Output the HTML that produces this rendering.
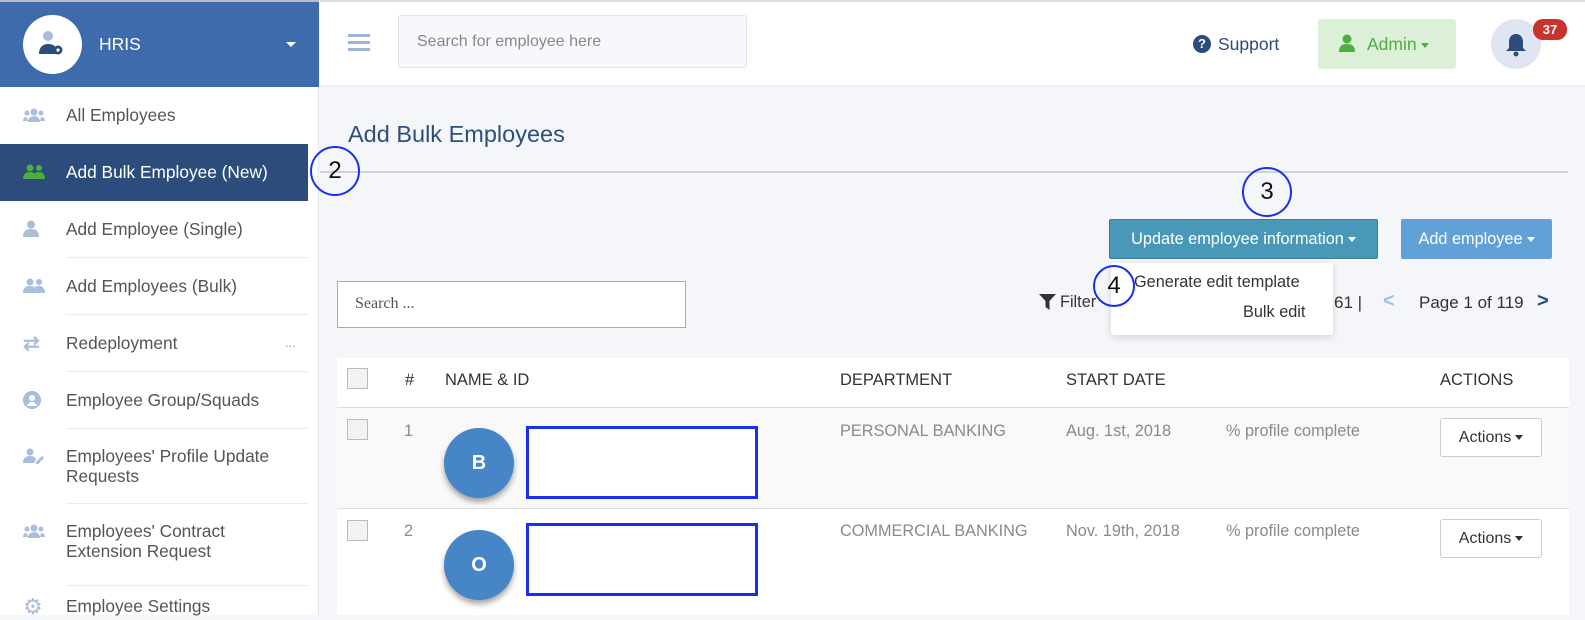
<!DOCTYPE html>
<html><head><meta charset="utf-8"><style>
*{box-sizing:border-box;margin:0;padding:0}
body{width:1585px;height:615px;overflow:hidden;background:#f5f6fa;font-family:"Liberation Sans",sans-serif;position:relative;color:#555}
.a{position:absolute}
.side{left:0;top:0;width:319px;height:615px;background:#fff;border-right:1px solid #e3e6ec}
.sh{left:0;top:0;width:319px;height:87px;background:#3d6bab;border-top:2px solid #b9bec6}
.it{position:absolute;left:66px;font-size:17.3px;color:#555;line-height:20px}
.sep{position:absolute;left:66px;width:242px;height:1px;background:#e8ecf2}
.ic{position:absolute;left:23px}
.th{font-size:16.5px;color:#333;position:absolute;top:371px}
.td{font-size:16.3px;color:#8a8a8a;position:absolute}
.cb{position:absolute;left:347px;width:21px;height:21px;border:1px solid #bbb;background:#f2f2f2}
.av{position:absolute;left:444px;width:70px;height:70px;border-radius:50%;background:#4686c6;color:#fff;font-weight:bold;font-size:20px;text-align:center;line-height:70px;box-shadow:0 4px 6px rgba(0,0,0,.35)}
.rb{position:absolute;left:526px;width:232px;height:73px;border:3px solid #1a2ef0;background:#fff}
.act{position:absolute;left:1440px;width:102px;height:39px;border:1px solid #ccc;background:#fff;border-radius:3px;font-size:16px;color:#333;text-align:center;line-height:37px}
.circ{position:absolute;border:2.5px solid #1a2ef0;border-radius:50%;width:50px;height:50px;font-size:24px;color:#111;text-align:center;line-height:45px}
.car{display:inline-block;width:0;height:0;border-left:4px solid transparent;border-right:4px solid transparent;border-top:5px solid currentColor;vertical-align:middle;margin-left:4px}
</style></head><body>
<div class="a side"></div>
<div class="a sh"></div>
<div class="a" style="left:23px;top:15px;width:59px;height:59px;border-radius:50%;background:#fff"></div>
<svg class="a" style="left:37px;top:30px" width="30" height="28" viewBox="0 0 30 28"><circle cx="11" cy="6" r="5" fill="#a8bedc"/><path d="M2 24c0-7 4-10 9-10s7 2 8 4v6z" fill="#2c4c7c"/><circle cx="21" cy="20" r="4.5" fill="#2c4c7c"/><circle cx="21" cy="20" r="1.6" fill="#fff"/></svg>
<div class="a" style="left:99px;top:34px;color:#fff;font-size:17.5px">HRIS</div>
<div class="a" style="left:286px;top:42px;border-left:5px solid transparent;border-right:5px solid transparent;border-top:5px solid #fff"></div>
<div class="a" style="left:320px;top:0;width:1265px;height:87px;background:#fff;border-top:2px solid #ddd;border-bottom:2px solid #eef0f4"></div>
<div class="a" style="left:348px;top:34px;width:22px;height:3px;background:#9db4d6;box-shadow:0 7px 0 #9db4d6,0 14px 0 #9db4d6"></div>
<div class="a" style="left:398px;top:15px;width:349px;height:53px;border:1px solid #dde3ec;border-radius:3px;background:#f6f8fb;font-size:16px;color:#888;padding:17px 18px">Search for employee here</div>
<div class="a" style="left:1193px;top:35px;width:18px;height:18px;border-radius:50%;background:#2c4c7c;color:#fff;font-size:13px;font-weight:bold;text-align:center;line-height:18px">?</div>
<div class="a" style="left:1218px;top:34px;font-size:17.5px;color:#2c4c7c">Support</div>
<div class="a" style="left:1318px;top:19px;width:138px;height:50px;background:#dcf0d8;border-radius:3px;color:#4caf3f;font-size:17.5px;line-height:50px;padding-left:49px">Admin<span class="car"></span></div>
<svg class="a" style="left:1339px;top:34px" width="16" height="18" viewBox="0 0 16 18"><circle cx="8" cy="5" r="4.5" fill="#4caf3f"/><path d="M0 18c0-6 3-8 8-8s8 2 8 8z" fill="#4caf3f"/></svg>
<div class="a" style="left:1491px;top:19px;width:50px;height:50px;border-radius:50%;background:#dfe6f1"></div>
<svg class="a" style="left:1505px;top:32px" width="22" height="25" viewBox="0 0 22 25"><path d="M11 2c5 0 7 4 7 8v6l3 3H1l3-3v-6c0-4 2-8 7-8z" fill="#2c4c7c"/><circle cx="11" cy="22" r="2.5" fill="#2c4c7c"/></svg>
<div class="a" style="left:1533px;top:19px;width:34px;height:21px;border-radius:10px;background:#c8342c;color:#fff;font-size:13px;font-weight:bold;text-align:center;line-height:21px">37</div>
<div class="a" style="left:348px;top:121px;font-size:23.5px;color:#2c4f7c">Add Bulk Employees</div>
<div class="a" style="left:320px;top:171px;width:1248px;height:2px;background:#cfd3d8"></div>
<svg class="ic" style="top:107px" width="22" height="16" viewBox="0 0 22 16"><circle cx="11" cy="5" r="3.5" fill="#a8bedc"/><circle cx="4" cy="6" r="2.5" fill="#a8bedc"/><circle cx="18" cy="6" r="2.5" fill="#a8bedc"/><path d="M5 15c0-4 3-6 6-6s6 2 6 6zM0 14c0-3 2-4 4-4l1 4zM22 14c0-3-2-4-4-4l-1 4z" fill="#a8bedc"/></svg>
<div class="it" style="top:105px">All Employees</div>
<div class="a" style="left:0;top:144px;width:308px;height:57px;background:#2c4c7c"></div>
<svg class="ic" style="top:164px" width="22" height="16" viewBox="0 0 22 16"><circle cx="7" cy="4" r="3.5" fill="#4caf3f"/><circle cx="16" cy="4" r="3" fill="#4caf3f"/><path d="M0 15c0-5 3-7 7-7s7 2 7 7zM14 15c0-3-1-5-2-6 1-1 3-1 4-1 4 0 6 3 6 7z" fill="#4caf3f"/></svg>
<div class="it" style="top:162px;color:#fff">Add Bulk Employee (New)</div>
<svg class="ic" style="top:220px" width="16" height="17" viewBox="0 0 16 17"><circle cx="8" cy="4.5" r="4" fill="#a8bedc"/><path d="M0 17c0-6 3-8 8-8s8 2 8 8z" fill="#a8bedc"/></svg>
<div class="it" style="top:219px">Add Employee (Single)</div>
<div class="sep" style="top:257px"></div>
<svg class="ic" style="top:278px" width="22" height="16" viewBox="0 0 22 16"><circle cx="7" cy="4" r="3.5" fill="#a8bedc"/><circle cx="16" cy="4" r="3" fill="#a8bedc"/><path d="M0 15c0-5 3-7 7-7s7 2 7 7zM14 15c0-3-1-5-2-6 1-1 3-1 4-1 4 0 6 3 6 7z" fill="#a8bedc"/></svg>
<div class="it" style="top:276px">Add Employees (Bulk)</div>
<div class="sep" style="top:314px"></div>
<div class="ic" style="top:331px;color:#a8bedc;font-size:20px;font-weight:bold">⇄</div>
<div class="it" style="top:333px">Redeployment</div>
<div class="a" style="left:285px;top:335px;color:#999;font-size:13px">...</div>
<div class="sep" style="top:371px"></div>
<svg class="ic" style="top:391px" width="18" height="18" viewBox="0 0 18 18"><circle cx="9" cy="9" r="9" fill="#a8bedc"/><circle cx="9" cy="7" r="3" fill="#fff"/><path d="M4 15c1-3 3-4 5-4s4 1 5 4z" fill="#fff"/></svg>
<div class="it" style="top:390px">Employee Group/Squads</div>
<div class="sep" style="top:428px"></div>
<svg class="ic" style="top:448px" width="22" height="16" viewBox="0 0 22 16"><circle cx="7" cy="4" r="3.5" fill="#a8bedc"/><path d="M0 15c0-5 3-7 7-7s6 2 6 4l-2 3z M13 14l6-6 2 2-6 6h-2z" fill="#a8bedc"/></svg>
<div class="it" style="top:446px">Employees' Profile Update<br>Requests</div>
<div class="sep" style="top:503px"></div>
<svg class="ic" style="top:523px" width="22" height="16" viewBox="0 0 22 16"><circle cx="11" cy="5" r="3.5" fill="#a8bedc"/><circle cx="4" cy="6" r="2.5" fill="#a8bedc"/><circle cx="18" cy="6" r="2.5" fill="#a8bedc"/><path d="M5 15c0-4 3-6 6-6s6 2 6 6zM0 14c0-3 2-4 4-4l1 4zM22 14c0-3-2-4-4-4l-1 4z" fill="#a8bedc"/></svg>
<div class="it" style="top:521px">Employees' Contract<br>Extension Request</div>
<div class="sep" style="top:585px"></div>
<div class="ic" style="top:594px;color:#a8bedc;font-size:22px">⚙</div>
<div class="it" style="top:596px">Employee Settings</div>
<div class="circ" style="left:310px;top:146px">2</div>
<div class="a" style="left:1109px;top:219px;width:269px;height:40px;background:#4a98b7;border:1px solid #3a7f99;border-radius:2px;color:#fff;font-size:16.3px;text-align:center;line-height:38px">Update employee information<span class="car"></span></div>
<div class="a" style="left:1401px;top:219px;width:151px;height:40px;background:#62a0d8;border-radius:2px;color:#fff;font-size:16.3px;text-align:center;line-height:40px">Add employee<span class="car"></span></div>
<div class="circ" style="left:1242px;top:167px">3</div>
<div class="a" style="left:337px;top:281px;width:349px;height:47px;border:1px solid #aaa;background:#fff;font-family:'Liberation Serif',serif;font-size:16px;color:#555;padding:13px 17px">Search ...</div>
<svg class="a" style="left:1039px;top:294px" width="17" height="16" viewBox="0 0 17 16"><path d="M0 0h17l-6.5 7v9l-4-3V7z" fill="#333"/></svg>
<div class="a" style="left:1060px;top:293px;font-size:16.3px;color:#333">Filter</div>
<div class="a" style="left:1334px;top:293px;font-size:17px;color:#333">61 |</div>
<div class="a" style="left:1383px;top:290px;font-size:20px;color:#a8bedc;font-weight:bold">&lt;</div>
<div class="a" style="left:1419px;top:293px;font-size:17px;color:#333">Page 1 of 119</div>
<div class="a" style="left:1537px;top:290px;font-size:20px;color:#2c4c7c;font-weight:bold">&gt;</div>
<div class="a" style="left:337px;top:358px;width:1232px;height:257px;background:#fff"></div>
<div class="a" style="left:337px;top:407px;width:1232px;height:102px;background:#f9f9f9;border-top:1px solid #ddd;border-bottom:1px solid #ddd"></div>
<div class="cb" style="top:368px"></div>
<div class="th" style="left:405px">#</div>
<div class="th" style="left:445px">NAME &amp; ID</div>
<div class="th" style="left:840px">DEPARTMENT</div>
<div class="th" style="left:1066px">START DATE</div>
<div class="th" style="left:1440px">ACTIONS</div>
<div class="cb" style="top:419px"></div>
<div class="td" style="left:404px;top:422px">1</div>
<div class="av" style="top:428px">B</div>
<div class="rb" style="top:426px"></div>
<div class="td" style="left:840px;top:422px">PERSONAL BANKING</div>
<div class="td" style="left:1066px;top:422px">Aug. 1st, 2018</div>
<div class="td" style="left:1226px;top:422px">% profile complete</div>
<div class="act" style="top:418px">Actions<span class="car"></span></div>
<div class="cb" style="top:520px"></div>
<div class="td" style="left:404px;top:522px">2</div>
<div class="av" style="top:530px">O</div>
<div class="rb" style="top:523px"></div>
<div class="td" style="left:840px;top:522px">COMMERCIAL BANKING</div>
<div class="td" style="left:1066px;top:522px">Nov. 19th, 2018</div>
<div class="td" style="left:1226px;top:522px">% profile complete</div>
<div class="act" style="top:519px">Actions<span class="car"></span></div>
<div class="a" style="left:1111px;top:263px;width:222px;height:72px;background:#fff;border-radius:3px;box-shadow:0 2px 8px rgba(0,0,0,.15)"></div>
<div class="a" style="left:1134px;top:273px;font-size:16.3px;color:#333">Generate edit template</div>
<div class="a" style="left:1243px;top:303px;font-size:16.3px;color:#333">Bulk edit</div>
<div class="circ" style="left:1093px;top:265px;width:42px;height:42px;line-height:38px">4</div>
</body></html>
